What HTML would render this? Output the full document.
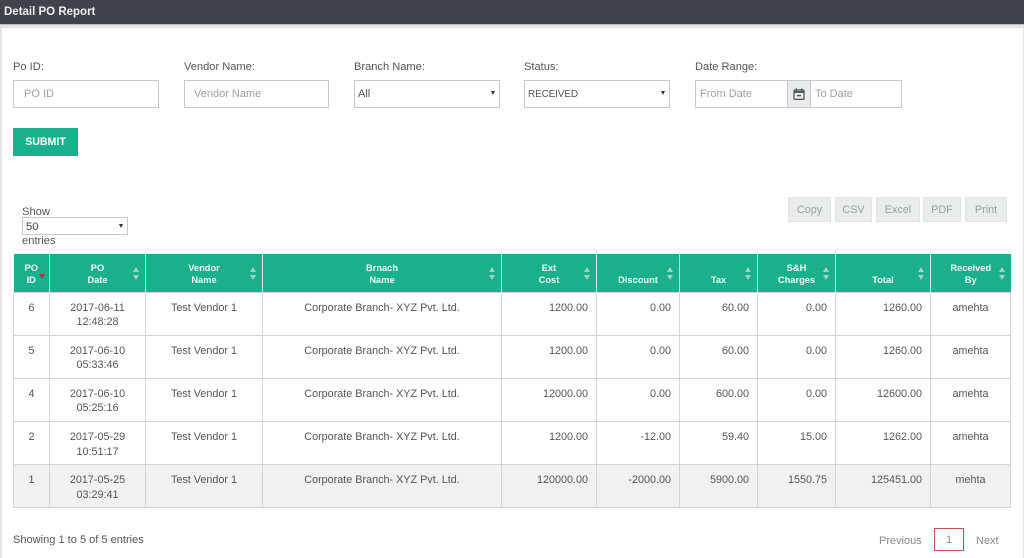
<!DOCTYPE html>
<html><head><meta charset="utf-8"><title>Detail PO Report</title>
<style>
*{box-sizing:border-box}
html,body{margin:0;padding:0;width:1024px;height:558px;overflow:hidden;background:#fff;font-family:"Liberation Sans",sans-serif;font-size:10.8px;color:#555}
body{filter:blur(.3px)}
.a{position:absolute;white-space:nowrap}
#top{left:0;top:0;width:1024px;height:24px;background:#3f434c;color:#eef0f0;font-weight:bold;font-size:11.5px;line-height:25px;padding-left:4px}
#strip{left:0;top:24px;width:1024px;height:4px;background:#e4e4e4;border-top:1px solid #bdbdbd}
#ledge{left:0;top:28px;width:1.5px;height:530px;background:#e6e6e6}
#redge{left:1022.5px;top:28px;width:1.5px;height:530px;background:#e6e6e6}
.lb{top:60px;font-size:11.1px;line-height:14px;color:#555}
.box{top:80px;height:28px;border:1px solid #c9c9c9;background:#fff;line-height:27px;font-size:11px;color:#a0a0a0}
.sel{color:#555;padding-left:3px}
.arr{position:absolute;width:0;height:0;border-left:2.5px solid transparent;border-right:2.5px solid transparent;border-top:4.5px solid #333}
#sub{left:13px;top:128px;width:65px;height:28px;background:#1ab08b;color:#fff;font-weight:bold;font-size:10.6px;line-height:29px;text-align:center}
.tb{top:197px;height:25px;background:#e8ecec;border:1px solid #e0e4e4;color:#9a9fa1;font-size:10.8px;line-height:25px;text-align:center}
table{position:absolute;left:13px;top:254px;width:997px;border-collapse:collapse;table-layout:fixed}
th{background:#1ab08b;color:#f2fbf8;font-size:9.3px;font-weight:bold;line-height:12.5px;height:38px;padding:0 0 5px;vertical-align:bottom;text-align:center;position:relative;border-left:1px solid #d5ece6}
th:first-child{border-left:none}
td{border:1px solid #d4d4d4;vertical-align:top;padding:8px 8px 0;line-height:14.5px;height:43.2px;text-align:center;font-size:10.8px;color:#555}
td.r{text-align:right}
tr.g td{background:#f1f1f1}
.s{position:absolute;right:5px;top:13px;width:7px;height:12.5px}
.s:before,.s:after{content:"";position:absolute;left:0;width:0;height:0;border-left:3.5px solid transparent;border-right:3.5px solid transparent}
.s:before{top:0;border-bottom:5.5px solid #a5cfc4}
.s:after{bottom:0;border-top:5.5px solid #a5cfc4}
</style></head><body>
<div class="a" id="top">Detail PO Report</div>
<div class="a" id="strip"></div>
<div class="a" id="ledge"></div>
<div class="a" id="redge"></div>

<div class="a lb" style="left:13px">Po ID:</div>
<div class="a lb" style="left:184px">Vendor Name:</div>
<div class="a lb" style="left:354px">Branch Name:</div>
<div class="a lb" style="left:524px">Status:</div>
<div class="a lb" style="left:695px">Date Range:</div>

<div class="a box" style="left:13px;width:146px;padding-left:10px">PO ID</div>
<div class="a box" style="left:184px;width:145px;padding-left:9px">Vendor Name</div>
<div class="a box sel" style="left:354px;width:146px">All<span class="arr" style="right:4px;top:10px"></span></div>
<div class="a box sel" style="left:524px;width:146px;font-size:10px;letter-spacing:-.15px">RECEIVED<span class="arr" style="right:4px;top:10px"></span></div>
<div class="a box" style="left:695px;width:93px;padding-left:4px">From Date</div>
<div class="a box" style="left:787px;width:24px;background:#e9eced"></div>
<svg class="a" style="left:793px;top:88px" width="12" height="12" viewBox="0 0 12 12" fill="none" stroke="#4a4f55" stroke-width="1.2"><rect x="1" y="2" width="10" height="9.4" rx="1"/><path d="M1 4H11" stroke-width="1.8"/><path d="M3.3 .4V3M8.7 .4V3"/><path d="M4 7.6H8" stroke-width="1.4"/></svg>
<div class="a box" style="left:810px;width:92px;padding-left:4px">To Date</div>

<div class="a" id="sub">SUBMIT</div>

<div class="a tb" style="left:788px;width:43px">Copy</div>
<div class="a tb" style="left:835px;width:37px">CSV</div>
<div class="a tb" style="left:876px;width:44px">Excel</div>
<div class="a tb" style="left:923px;width:38px">PDF</div>
<div class="a tb" style="left:965px;width:42px">Print</div>

<div class="a" style="left:22px;top:206px;line-height:13px;font-size:11.2px">Show</div>
<div class="a box sel" style="left:22px;top:217px;width:106px;height:18px;line-height:18px;color:#444;font-size:11.3px">50<span class="arr" style="right:4px;top:6px"></span></div>
<div class="a" style="left:22px;top:235px;line-height:13px;font-size:11.2px">entries</div>

<table>
<colgroup><col style="width:36px"><col style="width:96px"><col style="width:117px"><col style="width:239px"><col style="width:95px"><col style="width:83px"><col style="width:78px"><col style="width:78px"><col style="width:95px"><col style="width:80px"></colgroup>
<tr>
<th>PO<br>ID<span style="position:absolute;left:25px;top:20px;width:0;height:0;border-left:3.5px solid transparent;border-right:3.5px solid transparent;border-top:5.5px solid #b5333f"></span></th>
<th>PO<br>Date<span class="s"></span></th>
<th>Vendor<br>Name<span class="s"></span></th>
<th>Brnach<br>Name<span class="s"></span></th>
<th>Ext<br>Cost<span class="s"></span></th>
<th><br>Discount<span class="s"></span></th>
<th><br>Tax<span class="s"></span></th>
<th>S&amp;H<br>Charges<span class="s"></span></th>
<th><br>Total<span class="s"></span></th>
<th>Received<br>By<span class="s"></span></th>
</tr>
<tr><td>6</td><td>2017-06-11<br>12:48:28</td><td>Test Vendor 1</td><td>Corporate Branch- XYZ Pvt. Ltd.</td><td class="r">1200.00</td><td class="r">0.00</td><td class="r">60.00</td><td class="r">0.00</td><td class="r">1260.00</td><td>amehta</td></tr>
<tr><td>5</td><td>2017-06-10<br>05:33:46</td><td>Test Vendor 1</td><td>Corporate Branch- XYZ Pvt. Ltd.</td><td class="r">1200.00</td><td class="r">0.00</td><td class="r">60.00</td><td class="r">0.00</td><td class="r">1260.00</td><td>amehta</td></tr>
<tr><td>4</td><td>2017-06-10<br>05:25:16</td><td>Test Vendor 1</td><td>Corporate Branch- XYZ Pvt. Ltd.</td><td class="r">12000.00</td><td class="r">0.00</td><td class="r">600.00</td><td class="r">0.00</td><td class="r">12600.00</td><td>amehta</td></tr>
<tr><td>2</td><td>2017-05-29<br>10:51:17</td><td>Test Vendor 1</td><td>Corporate Branch- XYZ Pvt. Ltd.</td><td class="r">1200.00</td><td class="r">-12.00</td><td class="r">59.40</td><td class="r">15.00</td><td class="r">1262.00</td><td>amehta</td></tr>
<tr class="g"><td>1</td><td>2017-05-25<br>03:29:41</td><td>Test Vendor 1</td><td>Corporate Branch- XYZ Pvt. Ltd.</td><td class="r">120000.00</td><td class="r">-2000.00</td><td class="r">5900.00</td><td class="r">1550.75</td><td class="r">125451.00</td><td>mehta</td></tr>
</table>

<div class="a" style="left:13px;top:533px;line-height:14px;font-size:11.05px">Showing 1 to 5 of 5 entries</div>
<div class="a" style="left:879px;top:534px;line-height:14px;color:#888;font-size:11px">Previous</div>
<div class="a" style="left:934px;top:528px;width:30px;height:23px;border:1px solid #b5544f;color:#888;text-align:center;line-height:23px;font-size:11px">1</div>
<div class="a" style="left:976px;top:534px;line-height:14px;color:#888;font-size:11px">Next</div>
</body></html>
